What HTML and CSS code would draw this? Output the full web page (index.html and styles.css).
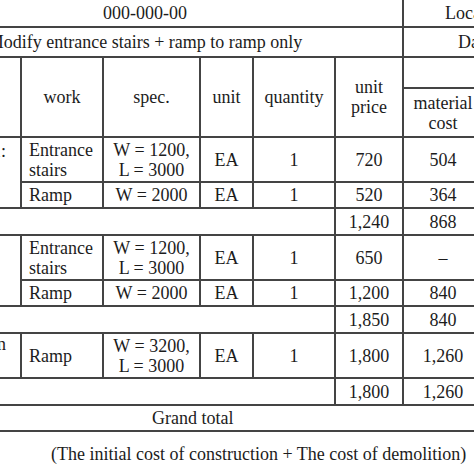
FILE: index.html
```
<!DOCTYPE html>
<html>
<head>
<meta charset="utf-8">
<link rel="stylesheet" href="styles.css">
</head>
<body>
<div class="page">
<table class="cost">
  <colgroup>
    <col class="c-group"><col class="c-work"><col class="c-spec"><col class="c-unit"><col class="c-qty"><col class="c-price"><col class="c-mat"><col class="c-extra">
  </colgroup>
  <tr class="r-top">
    <td colspan="6" class="center first-row">000-000-00</td>
    <td colspan="2" class="first-row loc">Location</td>
  </tr>
  <tr class="r-name">
    <td colspan="6" class="center">Modify entrance stairs + ramp to ramp only</td>
    <td colspan="2" class="date">Date</td>
  </tr>
  <tr class="r-head1">
    <td rowspan="2"></td>
    <td rowspan="2" class="center">work</td>
    <td rowspan="2" class="center">spec.</td>
    <td rowspan="2" class="center">unit</td>
    <td rowspan="2" class="center">quantity</td>
    <td rowspan="2" class="center">unit<br>price</td>
    <td colspan="2" class="center"></td>
  </tr>
  <tr class="r-head2">
    <td class="center">material<br>cost</td>
    <td class="center">labor<br>cost</td>
  </tr>
  <tr class="r-two">
    <td rowspan="2" class="label">Alternative 1:</td>
    <td>Entrance<br>stairs</td>
    <td class="center">W = 1200,<br>L = 3000</td>
    <td class="center">EA</td>
    <td class="center">1</td>
    <td class="center">720</td>
    <td class="center">504</td>
    <td class="center">216</td>
  </tr>
  <tr class="r-one">
    <td>Ramp</td>
    <td class="center">W = 2000</td>
    <td class="center">EA</td>
    <td class="center">1</td>
    <td class="center">520</td>
    <td class="center">364</td>
    <td class="center">156</td>
  </tr>
  <tr class="r-sub">
    <td colspan="5"></td>
    <td class="center">1,240</td>
    <td class="center">868</td>
    <td class="center">372</td>
  </tr>
  <tr class="r-two2">
    <td rowspan="2" class="label"></td>
    <td>Entrance<br>stairs</td>
    <td class="center">W = 1200,<br>L = 3000</td>
    <td class="center">EA</td>
    <td class="center">1</td>
    <td class="center">650</td>
    <td class="center">–</td>
    <td class="center">650</td>
  </tr>
  <tr class="r-one2">
    <td>Ramp</td>
    <td class="center">W = 2000</td>
    <td class="center">EA</td>
    <td class="center">1</td>
    <td class="center">1,200</td>
    <td class="center">840</td>
    <td class="center">360</td>
  </tr>
  <tr class="r-sub2">
    <td colspan="5"></td>
    <td class="center">1,850</td>
    <td class="center">840</td>
    <td class="center">1,010</td>
  </tr>
  <tr class="r-two3">
    <td class="label label-top">Reconstruction</td>
    <td>Ramp</td>
    <td class="center">W = 3200,<br>L = 3000</td>
    <td class="center">EA</td>
    <td class="center">1</td>
    <td class="center">1,800</td>
    <td class="center">1,260</td>
    <td class="center">540</td>
  </tr>
  <tr class="r-sub3">
    <td colspan="5"></td>
    <td class="center">1,800</td>
    <td class="center">1,260</td>
    <td class="center">540</td>
  </tr>
  <tr class="r-grand">
    <td colspan="8" class="grand">Grand total</td>
  </tr>
</table>
<p class="caption">(The initial cost of construction + The cost of demolition)</p>
</div>
</body>
</html>
```
FILE: styles.css
```
html, body {
  margin: 0;
  padding: 0;
  background: #ffffff;
  overflow: hidden;
}
body {
  width: 474px;
  height: 474px;
  font-family: "Liberation Serif", "Tinos", "Times New Roman", "DejaVu Serif", serif;
  font-size: 18px;
  line-height: 20px;
  color: #1c1c1c;
}
.page {
  width: 474px;
  height: 474px;
  overflow: hidden;
}
.cost {
  margin-left: -114px;
  border-collapse: collapse;
  table-layout: fixed;
  width: 676px;
  font-family: "Liberation Serif", "Tinos", "Times New Roman", "DejaVu Serif", serif;
  font-size: 18px;
}
.c-group { width: 134px; }
.c-work { width: 82px; }
.c-spec { width: 97px; }
.c-unit { width: 53px; }
.c-qty { width: 82px; }
.c-price { width: 68px; }
.c-mat { width: 80px; }
.c-extra { width: 80px; }

.cost td {
  border: 2px solid #444444;
  padding: 0 7px;
  vertical-align: middle;
  text-align: left;
  white-space: nowrap;
  overflow: hidden;
}
.cost td.first-row { border-top: none; }
.cost td.center { text-align: center; padding: 0 2px; }
.cost td.label {
  text-align: right;
  padding: 3px 14px 0 0;
  vertical-align: top;
  overflow: visible;
}
.cost td.label-top { padding-top: 0; }
.cost td.loc { padding-left: 41px; }
.cost td.date { padding-left: 54px; }
.cost td.grand { padding-left: 264px; }

.r-top { height: 27px; }
.r-name { height: 30px; }
.r-head1 { height: 31px; }
.r-head2 { height: 49px; }
.r-two, .r-two2, .r-two3 { height: 45px; }
.r-one, .r-one2 { height: 26px; }
.r-sub, .r-sub2, .r-sub3 { height: 27px; }
.r-grand { height: 26px; }

.caption {
  margin: 0;
  padding: 12px 0 0 51px;
  white-space: nowrap;
}
```
